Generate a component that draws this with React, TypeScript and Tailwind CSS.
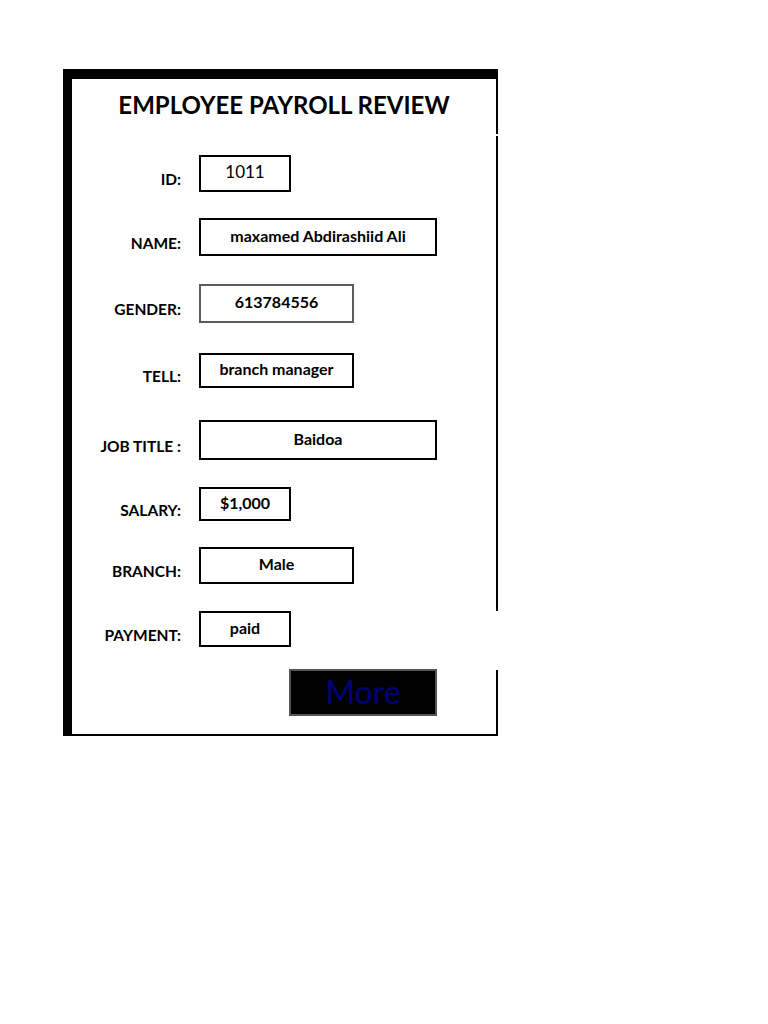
const rows = [
  { label: "ID:", value: "1011", mt: 76, h: 37, w: 92, plain: true },
  { label: "NAME:", value: "maxamed Abdirashiid Ali", mt: 26, h: 38, w: 238 },
  { label: "GENDER:", value: "613784556", mt: 28, h: 39, w: 155, grey: true },
  { label: "TELL:", value: "branch manager", mt: 30, h: 35, w: 155 },
  { label: "JOB TITLE :", value: "Baidoa", mt: 32, h: 40, w: 238 },
  { label: "SALARY:", value: "$1,000", mt: 27, h: 34, w: 92 },
  { label: "BRANCH:", value: "Male", mt: 26, h: 37, w: 155 },
  { label: "PAYMENT:", value: "paid", mt: 27, h: 36, w: 92 },
];

export default function App() {
  return (
    <div className="min-h-[1024px] bg-white pl-[63px] pt-[69px] font-['Lato','Open_Sans',sans-serif] text-black">
      <div className="flex h-[667px] w-[435px] border-b-2 border-l-[9px] border-t-[10px] border-black">
        <div className="flex flex-1 flex-col">
          {/* title */}
          <div className="flex h-[0px] items-start justify-center">
            <h1 className="mt-[9px] text-[24px] font-bold leading-[34px]">
              EMPLOYEE PAYROLL REVIEW
            </h1>
          </div>

          {rows.map((r) => (
            <div key={r.label} className="flex items-center" style={{ marginTop: r.mt }}>
              <div className="w-[109px] pt-[13px] text-right text-[15.5px] font-bold leading-none">
                {r.label}
              </div>
              <div
                className={`ml-[18px] flex items-center justify-center border-2 pb-[3px] ${
                  r.grey ? "border-[#5c5c5c]" : "border-black"
                } ${r.plain ? "text-[17px] font-normal" : "text-[16px] font-bold"}`}
                style={{ width: r.w, height: r.h }}
              >
                {r.value}
              </div>
            </div>
          ))}

          <div className="ml-[217px] mt-[22px]">
            <button
              type="button"
              className="flex h-[47px] w-[148px] items-center justify-center border-2 border-[#555555] bg-black pb-[2px] text-[32px] leading-none text-[#00007a]"
            >
              More
            </button>
          </div>
        </div>

        {/* right edge with gaps */}
        <div className="flex w-[2px] flex-col">
          <div className="h-[55px] bg-black" />
          <div className="h-[2px]" />
          <div className="h-[475px] bg-black" />
          <div className="h-[59px]" />
          <div className="h-[64px] bg-black" />
        </div>
      </div>
    </div>
  );
}
